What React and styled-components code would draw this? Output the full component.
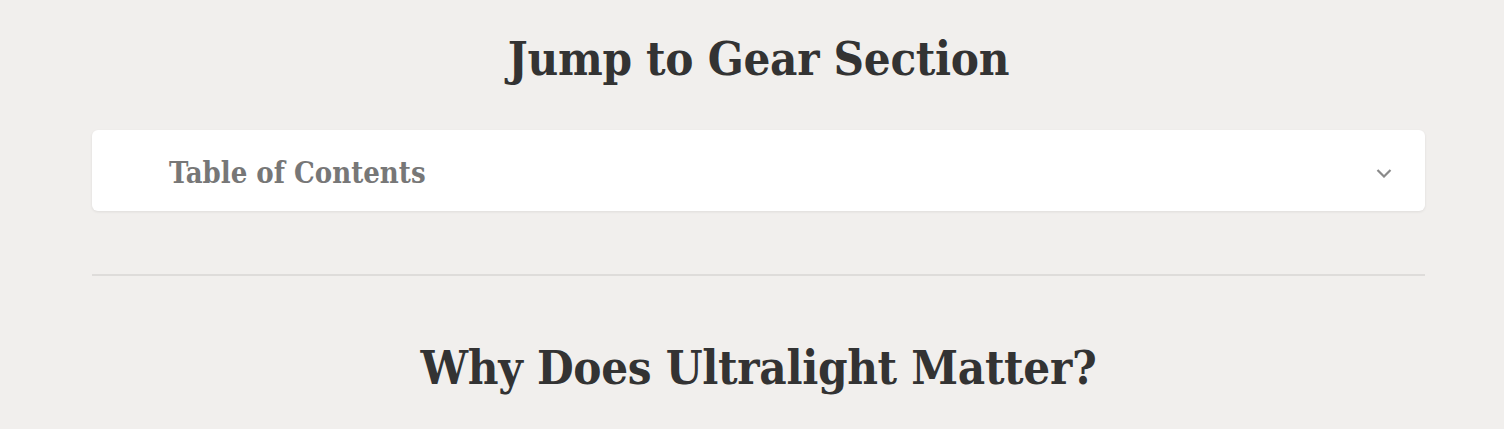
import React from 'react';
import styled, { createGlobalStyle } from 'styled-components';

const GlobalStyle = createGlobalStyle`
  html, body {
    margin: 0;
    padding: 0;
    background: #f1efed;
  }
  body {
    font-family: "DejaVu Serif", "Liberation Serif", serif;
    color: #333;
  }
`;

const Page = styled.main`
  padding: 0 79px 0 92px;
`;

const Heading = styled.h2`
  margin: 0;
  text-align: center;
  font-family: "DejaVu Serif Condensed", "DejaVu Serif", serif;
  font-weight: 700;
  font-size: 47px;
  line-height: 56px;
  letter-spacing: -0.3px;
  color: #333;
  padding-top: ${(p) => p.$top}px;
`;

const TocCard = styled.div`
  margin-top: 43px;
  height: 81px;
  box-sizing: border-box;
  background: #fff;
  border-radius: 6px;
  box-shadow: 0 1px 3px rgba(0, 0, 0, 0.08);
  display: flex;
  align-items: center;
  justify-content: space-between;
  padding: 4px 33px 0 77px;
`;

const TocTitle = styled.span`
  font-family: "DejaVu Serif Condensed", "DejaVu Serif", serif;
  font-weight: 700;
  font-size: 29px;
  color: #777;
`;

const Chevron = () => (
  <svg width="16" height="10" viewBox="0 0 16 10" fill="none">
    <path d="M1.5 2l6.5 6.5L14.5 2" stroke="#8a8a8a" strokeWidth="2.2" />
  </svg>
);

const Divider = styled.hr`
  margin: 63px 0 0;
  border: 0;
  border-top: 2px solid #dedcda;
`;

export default function App() {
  return (
    <>
      <GlobalStyle />
      <Page>
        <Heading $top={31}>Jump to Gear Section</Heading>
        <TocCard>
          <TocTitle>Table of Contents</TocTitle>
          <Chevron />
        </TocCard>
        <Divider />
        <Heading $top={64}>Why Does Ultralight Matter?</Heading>
      </Page>
    </>
  );
}
